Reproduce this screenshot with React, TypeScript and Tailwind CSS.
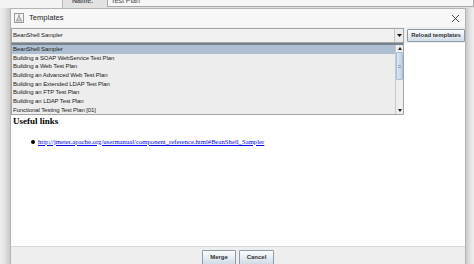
import React from 'react';

const TEMPLATES = [
  'BeanShell Sampler',
  'Building a SOAP WebService Test Plan',
  'Building a Web Test Plan',
  'Building an Advanced Web Test Plan',
  'Building an Extended LDAP Test Plan',
  'Building an FTP Test Plan',
  'Building an LDAP Test Plan',
  'Functional Testing Test Plan [01]',
];

const SwingButton = ({ label, className }: { label: string; className: string }) => (
  <button
    className={`flex items-center justify-center rounded-[1px] border border-[#8e9aa6] bg-gradient-to-b from-[#fbfcfd] via-[#e6edf3] to-[#cfdbe6] text-[6px] font-bold text-[#333] ${className}`}
  >
    {label}
  </button>
);

const App = () => {
  return (
    <div className="flex h-[264px] w-[474px] flex-col overflow-hidden bg-[#e9e9e9] font-['Liberation_Sans',Arial,sans-serif]">
      {/* window behind the dialog */}
      <div className="flex h-[8px] overflow-hidden">
        <div className="w-[63px] border-r border-[#b9b9b9] bg-[#f3f3f3]" />
        <div className="flex flex-1 items-start bg-[#e2e2e2] pl-[9px]">
          <span className="-mt-[4px] w-[35px] text-[7px] font-bold text-[#555]">Name:</span>
          <div className="-mt-[3px] flex h-[10px] flex-1 items-center border border-[#a8a8a8] bg-[#f7f7f7] pl-[3px]">
            <span className="-mt-[1px] text-[7px] text-[#444]">Test Plan</span>
          </div>
        </div>
      </div>

      <div className="flex flex-1">
        <div className="w-[10px] bg-gradient-to-r from-[#efefef] via-[#e2e2e2] to-[#c9c9c9]" />

        <div className="flex w-[456px] flex-col border-x border-t border-[#b4b4b4] bg-[#eeeeee]">
          {/* title bar */}
          <div className="flex h-[18px] items-center bg-[#f7f7f7] pl-[3px] pr-[5px]">
            <svg width="10" height="10" viewBox="0 0 10 10">
              <rect x="0.5" y="0.5" width="9" height="9" fill="#f4f4f4" stroke="#9a9a9a" />
              <path d="M2 8 L5 3 L8 8 Z" fill="#c9c9c9" stroke="#8a8a8a" strokeWidth="0.6" />
              <rect x="4.4" y="1.5" width="1.2" height="2" fill="#8a8a8a" />
            </svg>
            <span className="ml-[5px] text-[7.6px] text-[#222]">Templates</span>
            <svg className="ml-auto" width="9" height="9" viewBox="0 0 9 9">
              <path d="M1 1 L8 8 M8 1 L1 8" stroke="#333" strokeWidth="0.9" />
            </svg>
          </div>

          {/* combo + reload */}
          <div className="flex h-[16px] items-center">
            <div className="flex h-[15px] w-[393px] border border-[#a6a6a6] bg-[#f1f1f1]">
              <div className="flex flex-1 items-center pl-[1px] text-[6px] tracking-[-0.1px] text-[#222]">
                BeanShell Sampler
              </div>
              <div className="flex w-[9px] items-center justify-center border-l border-[#c4c4c4] bg-[#ececec]">
                <svg width="5" height="3" viewBox="0 0 5 3">
                  <path d="M0 0 H5 L2.5 3 Z" fill="#111" />
                </svg>
              </div>
            </div>
            <SwingButton label="Reload templates" className="ml-[3px] h-[13px] w-[58px]" />
          </div>

          {/* body */}
          <div className="flex flex-1 flex-col bg-white">
            <div className="flex h-[72px] w-[393px] border-x border-b border-t-2 border-x-[#a6a6a6] border-b-[#a6a6a6] border-t-[#76838f] bg-[#ededed]">
              <div className="flex flex-1 flex-col">
                {TEMPLATES.map((item, index) => (
                  <div
                    key={index}
                    className={`flex h-[8.7px] items-center pl-[1px] text-[6px] tracking-[-0.1px] text-[#222] ${
                      index === 0 ? 'bg-[#aebfd1]' : ''
                    }`}
                  >
                    {item}
                  </div>
                ))}
              </div>
              <div className="flex w-[8px] flex-col border-l border-[#c8c8c8] bg-[#eeeeee]">
                <div className="flex h-[7px] items-center justify-center">
                  <svg width="4" height="3" viewBox="0 0 4 3">
                    <path d="M0 3 H4 L2 0 Z" fill="#222" />
                  </svg>
                </div>
                <div className="flex h-[28px] items-center justify-center rounded-[1px] border border-[#a9bed6] bg-gradient-to-r from-[#dce8f5] to-[#bcd0e6]">
                  <div className="h-[3px] w-[3px] border-y border-[#8fa8c4]" />
                </div>
                <div className="flex-1" />
                <div className="flex h-[7px] items-center justify-center">
                  <svg width="4" height="3" viewBox="0 0 4 3">
                    <path d="M0 0 H4 L2 3 Z" fill="#222" />
                  </svg>
                </div>
              </div>
            </div>

            <div className="pl-[2px] font-['Liberation_Serif','Times_New_Roman',serif] text-[9px] font-bold text-black">
              Useful links
            </div>
            <div className="mt-[8px] flex items-center pl-[20px] font-['Liberation_Serif','Times_New_Roman',serif] text-[6.7px]">
              <span className="mr-[3px] h-[4px] w-[4px] rounded-full bg-black" />
              <span className="text-[#0000ee] underline">
                http://jmeter.apache.org/usermanual/component_reference.html#BeanShell_Sampler
              </span>
            </div>
          </div>

          {/* bottom buttons */}
          <div className="flex h-[18px] justify-center gap-[3px] border-t border-[#d6d6d6] bg-[#eeeeee] pt-[3px]">
            <SwingButton label="Merge" className="h-[15px] w-[34px]" />
            <SwingButton label="Cancel" className="h-[15px] w-[35px]" />
          </div>
        </div>

        <div className="w-[8px] bg-gradient-to-r from-[#c9c9c9] via-[#e2e2e2] to-[#eeeeee]" />
      </div>
    </div>
  );
};

export default App;
